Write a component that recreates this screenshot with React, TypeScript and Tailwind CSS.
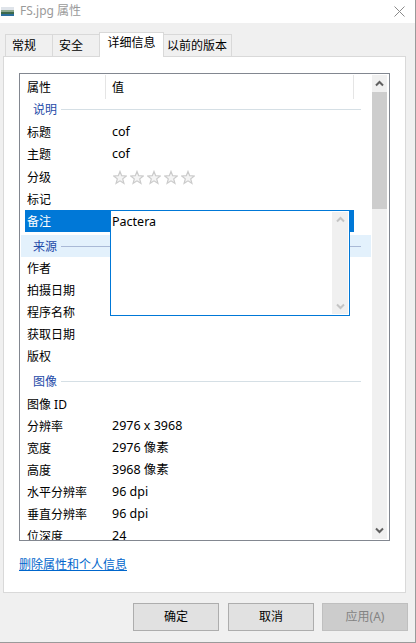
const font = "font-['Noto_Sans','Noto_Sans_CJK_SC',sans-serif]";

type Row =
  | { kind: "group"; label: string; hover?: boolean; cls?: string }
  | { kind: "row"; label: string; value?: string; stars?: boolean; selected?: boolean; cls?: string };

const rows: Row[] = [
  { kind: "group", label: "说明", cls: "mb-[1px]" },
  { kind: "row", label: "标题", value: "cof" },
  { kind: "row", label: "主题", value: "cof" },
  { kind: "row", label: "分级", stars: true, cls: "mt-[1px]" },
  { kind: "row", label: "标记" },
  { kind: "row", label: "备注", selected: true },
  { kind: "group", label: "来源", hover: true, cls: "mt-[3px]" },
  { kind: "row", label: "作者" },
  { kind: "row", label: "拍摄日期" },
  { kind: "row", label: "程序名称", value: "HMA-AL00C00B000" },
  { kind: "row", label: "获取日期" },
  { kind: "row", label: "版权" },
  { kind: "group", label: "图像", cls: "mt-[3px] mb-[1px]" },
  { kind: "row", label: "图像 ID" },
  { kind: "row", label: "分辨率", value: "2976 x 3968" },
  { kind: "row", label: "宽度", value: "2976 像素" },
  { kind: "row", label: "高度", value: "3968 像素" },
  { kind: "row", label: "水平分辨率", value: "96 dpi" },
  { kind: "row", label: "垂直分辨率", value: "96 dpi" },
  { kind: "row", label: "位深度", value: "24" },
];

function Star() {
  return (
    <svg width="14" height="15" viewBox="0 0 15 15" className="shrink-0">
      <path d="M7.5 1 L9.3 5.6 L14.2 5.9 L10.4 9 L11.7 13.8 L7.5 11.1 L3.3 13.8 L4.6 9 L0.8 5.9 L5.7 5.6 Z" fill="#f4f4f4" stroke="#cbcbcb" strokeWidth="1.3" />
    </svg>
  );
}

function Chevron({ down, color }: { down?: boolean; color: string }) {
  return (
    <svg width="9" height="7" viewBox="0 0 9 7" className={down ? "rotate-180" : ""}>
      <path d="M1 5.5 L4.5 2 L8 5.5" fill="none" stroke={color} strokeWidth="2" />
    </svg>
  );
}

function Tab({ label, active, width }: { label: string; active?: boolean; width: string }) {
  if (active) {
    return (
      <div className={`${width} h-[25px] -mb-px -ml-px z-10 flex items-center justify-center bg-white border border-b-0 border-[#d9d9d9] text-[12px] text-black pb-1`}>
        {label}
      </div>
    );
  }
  return (
    <div className={`${width} h-[22px] flex items-center pt-px bg-[#f0f0f0] border border-b-0 border-[#d9d9d9] text-[12px] text-black`}>
      {label}
    </div>
  );
}

function PropertyRow({ row }: { row: Row }) {
  if (row.kind === "group") {
    return (
      <div className={`h-[22px] ml-[1px] w-[350px] flex items-center pl-[12px] pr-[10px] gap-1 text-[12px] text-[#1e4aa8] ${row.hover ? "bg-[#e3f1fc]" : ""} ${row.cls ?? ""}`}>
        <span className="shrink-0 pt-px">{row.label}</span>
        <span className={`h-px flex-1 ${row.hover ? "bg-[#a9b9d6]" : "bg-[#d5dfe5]"}`} />
      </div>
    );
  }
  return (
    <div className={`h-[22px] ml-[5px] w-[329px] flex items-center text-[12px] ${row.selected ? "bg-[#0078d7] text-white" : "text-black"} ${row.cls ?? ""}`}>
      <span className="w-[87px] pl-[2px] pt-px shrink-0">{row.label}</span>
      {row.stars ? (
        <span className="flex gap-[3px] pl-px">
          <Star />
          <Star />
          <Star />
          <Star />
          <Star />
        </span>
      ) : (
        <span className="text-[12.5px] pt-px whitespace-nowrap">{row.value}</span>
      )}
    </div>
  );
}

export default function App() {
  return (
    <div className={`${font} relative w-[416px] h-[643px] overflow-hidden bg-[#f0f0f0] flex flex-col border-r border-b border-[#9a9a9a]`}>
      {/* window edge is darker next to the title bar */}
      <div className="absolute right-[-1px] top-0 w-px h-[54px] bg-[#3f5a6b]" />

      <div className="h-[23px] bg-white flex items-center pl-[1px] pr-[10px] shrink-0">
        <svg width="13" height="9" viewBox="0 0 13 9">
          <rect width="13" height="9" fill="#dfe4ea" />
          <rect y="3" width="13" height="3" fill="#8ea98f" />
          <rect y="5" width="13" height="2" fill="#3d6a4c" />
          <rect y="7" width="13" height="2" fill="#2c6f9e" />
        </svg>
        <span className="ml-[6px] pb-[1px] text-[12px] text-[#9a9a9a]">FS.jpg 属性</span>
        <svg width="11" height="11" viewBox="0 0 11 11" className="ml-auto">
          <path d="M0.5 0.5 L10.5 10.5 M10.5 0.5 L0.5 10.5" stroke="#8a8a8a" strokeWidth="1" />
        </svg>
      </div>

      <div className="flex items-end pl-[5px] h-[33px] shrink-0">
        <Tab label="常规" width="w-[48px] pl-[6px]" />
        <Tab label="安全" width="w-[48px] -ml-px pl-[6px]" />
        <Tab label="详细信息" width="w-[65px]" active />
        <Tab label="以前的版本" width="w-[69px] -ml-px pl-[3px]" />
      </div>

      <div className="ml-[3px] w-[403px] h-[537px] bg-white border border-[#d9d9d9] pt-[16px] pl-[15px] shrink-0">
        <div className="relative w-[371px] h-[468px] border border-[#828790] overflow-hidden flex">
          <div className="flex-1 min-w-0 overflow-hidden pt-px">
            <div className="h-[24px] -mb-px flex items-center text-[12px] text-black">
              <span className="w-[86px] pl-[7px] pt-px h-full flex items-center border-r border-[#e5e5e5]">属性</span>
              <span className="w-[248px] pl-[6px] pt-px h-full flex items-center border-r border-[#e5e5e5]">值</span>
            </div>
            <div>
              {rows.map((row) => (
                <PropertyRow key={row.label} row={row} />
              ))}
            </div>
          </div>
          <div className="w-[15px] mr-[2px] mt-px mb-px bg-[#f0f0f0] flex flex-col items-center shrink-0">
            <div className="h-[17px] flex items-center justify-center shrink-0">
              <Chevron color="#606060" />
            </div>
            <div className="w-full h-[117px] bg-[#cdcdcd] shrink-0" />
            <div className="mt-auto h-[17px] flex items-center justify-center shrink-0">
              <Chevron down color="#606060" />
            </div>
          </div>

          {/* notes edit box sits over the selected row */}
          <div className="absolute left-[90px] top-[136px] w-[240px] h-[106px] bg-white border border-[#0078d7] flex text-[12.5px] text-black">
            <span className="flex-1 pl-[1px] pt-[2px]">Pactera</span>
            <div className="w-[16px] m-[1px] bg-[#f0f0f0] flex flex-col items-center justify-between py-[4px]">
              <Chevron color="#c4c4c4" />
              <Chevron down color="#c4c4c4" />
            </div>
          </div>
        </div>

        <div className="mt-[15px] text-[12px] text-[#0066cc] underline">删除属性和个人信息</div>
      </div>

      <div className="flex justify-end pt-[10px] pr-[7px]">
        <button className="w-[86px] h-[28px] bg-[#e1e1e1] border border-[#adadad] text-[12px] text-black">确定</button>
        <button className="ml-[9px] w-[86px] h-[28px] bg-[#e1e1e1] border border-[#adadad] text-[12px] text-black">取消</button>
        <button className="ml-[8px] w-[86px] h-[28px] bg-[#cccccc] border border-[#bfbfbf] text-[12px] text-[#838383]">应用(A)</button>
      </div>
    </div>
  );
}
